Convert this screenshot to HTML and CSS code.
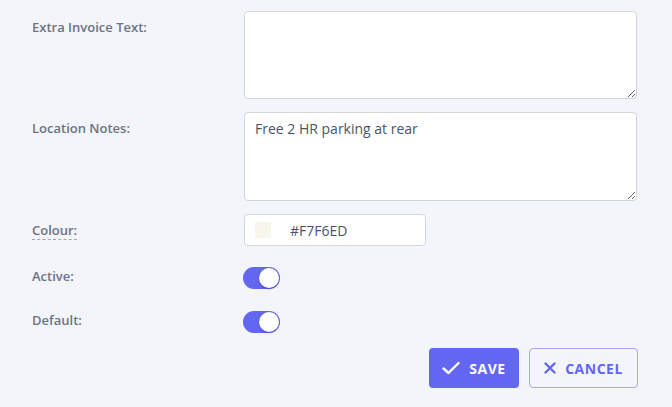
FILE: index.html
```html
<!DOCTYPE html>
<html lang="en">

<head>
    <meta charset="UTF-8">
    <title>Location</title>
    <link rel="stylesheet" href="styles.css">
</head>

<body>
    <form class="form">
        <div class="row">
            <label class="label">Extra Invoice Text:</label>
            <div class="field"><textarea class="area"></textarea></div>
        </div>
        <div class="row">
            <label class="label">Location Notes:</label>
            <div class="field"><textarea class="area">Free 2 HR parking at rear</textarea></div>
        </div>
        <div class="row row_colour">
            <label class="label"><span class="hint">Colour:</span></label>
            <div class="field">
                <div class="colour">
                    <span class="swatch"></span>
                    <span>#F7F6ED</span>
                </div>
            </div>
        </div>
        <div class="row row_toggle">
            <label class="label">Active:</label>
            <div class="field"><span class="toggle"><span class="knob"></span></span></div>
        </div>
        <div class="row row_toggle">
            <label class="label">Default:</label>
            <div class="field"><span class="toggle"><span class="knob"></span></span></div>
        </div>

        <div class="actions">
            <button type="button" class="btn btn_save">
                <svg width="18" height="14" viewBox="0 0 18 14"><path d="M1.5 7.5 L6.5 12 L16.5 2" fill="none" stroke="#fff" stroke-width="2.4" stroke-linecap="round" stroke-linejoin="round"/></svg>
                SAVE
            </button>
            <button type="button" class="btn btn_cancel">
                <svg width="12" height="12" viewBox="0 0 12 12"><path d="M1.5 1.5 L10.5 10.5 M10.5 1.5 L1.5 10.5" fill="none" stroke="#6366f1" stroke-width="2.4" stroke-linecap="round"/></svg>
                CANCEL
            </button>
        </div>
    </form>
</body>

</html>
```

FILE: styles.css
```css
body,
form,
div,
textarea,
button {
    margin: 0;
    padding: 0;
}

body {
    background: #f3f5fa;
    font-family: "Open Sans", "Liberation Sans", sans-serif;
    color: #4b5563;
}

.form {
    width: 605px;
    padding: 11px 0 0 32px;
}

.row {
    display: flex;
    margin-bottom: 13px;
}

.label {
    width: 212px;
    flex-shrink: 0;
    padding-top: 7px;
    font-size: 13px;
    font-weight: 600;
    line-height: 18px;
    color: #6b7385;
}

.hint {
    border-bottom: 1px dashed #a0a6b4;
}

.field {
    flex: 1;
}

.area {
    display: block;
    width: 393px;
    height: 88px;
    box-sizing: border-box;
    padding: 6px 10px;
    border: 1px solid #d1d5db;
    border-radius: 4px;
    background: #fff;
    font-family: "Open Sans", "Liberation Sans", sans-serif;
    font-size: 14px;
    line-height: 20px;
    color: #4a5468;
}

.row:nth-child(2) .area {
    height: 89px;
}

.colour {
    display: flex;
    align-items: center;
    width: 182px;
    height: 32px;
    box-sizing: border-box;
    padding-left: 10px;
    border: 1px solid #d1d5db;
    border-radius: 4px;
    background: #fff;
    font-size: 14px;
    color: #4a5468;
}

.swatch {
    width: 16px;
    height: 16px;
    margin-right: 19px;
    background: #f7f6ed;
}

.row_colour {
    margin-bottom: 21px;
}

.row_toggle {
    margin-bottom: 0;
    height: 44px;
}

.row_toggle .label {
    padding-top: 0;
}

.toggle {
    display: block;
    position: relative;
    width: 37px;
    height: 22px;
    margin-left: -1px;
    border-radius: 11px;
    background: #6366f1;
}

.knob {
    position: absolute;
    right: 1px;
    top: 1px;
    width: 20px;
    height: 20px;
    border-radius: 50%;
    background: #fff;
    box-shadow: 0 1px 2px rgba(0, 0, 0, 0.3);
}

.actions {
    display: flex;
    justify-content: flex-end;
    gap: 10px;
    width: 606px;
    margin-top: -7px;
}

.btn {
    display: flex;
    align-items: center;
    justify-content: center;
    gap: 9px;
    height: 40px;
    border-radius: 4px;
    font-family: "Open Sans", "Liberation Sans", sans-serif;
    font-size: 14px;
    font-weight: 700;
    letter-spacing: 0.5px;
}

.btn_save {
    width: 90px;
    border: 0;
    background: #6366f1;
    color: #fff;
}

.btn_cancel {
    width: 109px;
    border: 1px solid #a5a6f6;
    background: transparent;
    color: #6366f1;
}
```
